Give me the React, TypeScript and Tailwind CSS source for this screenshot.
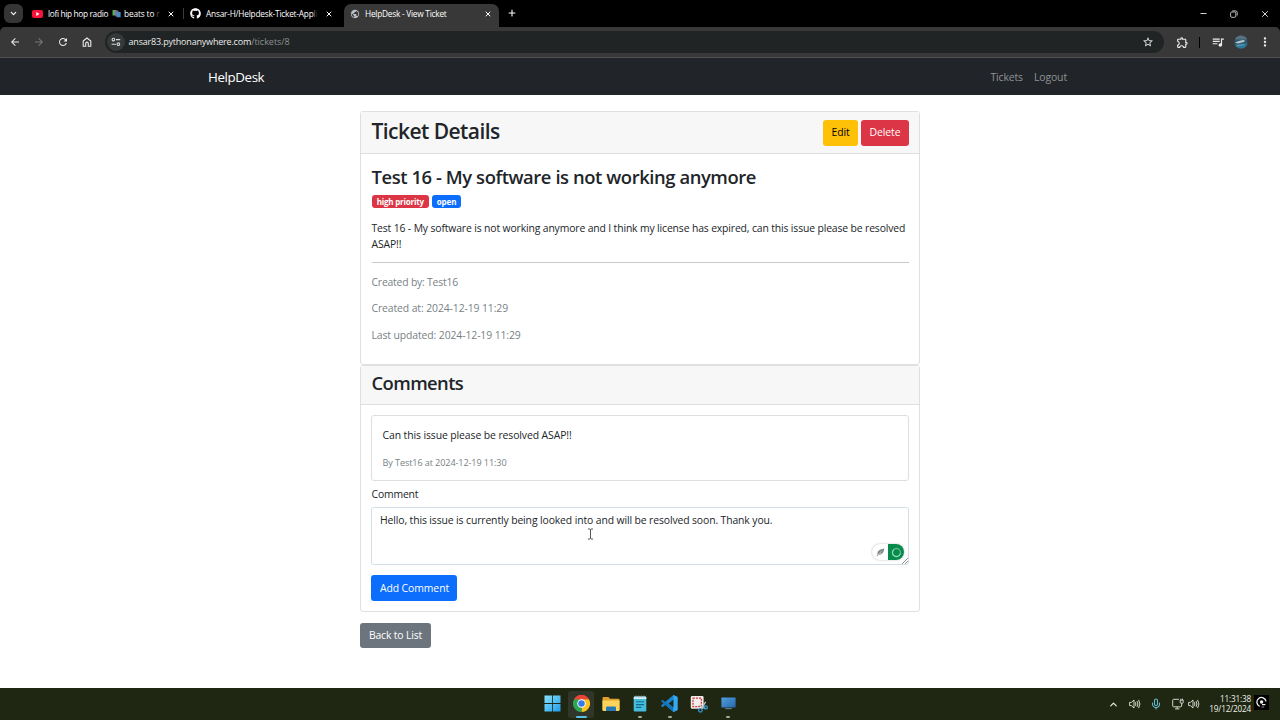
import React from 'react';
import { FaGithub } from 'react-icons/fa';
import {
  MdArrowBack,
  MdArrowForward,
  MdRefresh,
  MdStarBorder,
  MdOutlineExtension,
  MdQueueMusic,
  MdMoreVert,
  MdPublic,
} from 'react-icons/md';
import { ChevronDown, ChevronUp, Mic, Minus, Plus, X } from 'lucide-react';

const YoutubeIcon = () => (
  <svg width="11" height="8" viewBox="0 0 11 8" className="shrink-0">
    <rect width="11" height="8" rx="2" fill="#f5133c" />
    <path d="M4.3 2.1v3.8L7.5 4z" fill="#fff" />
  </svg>
);

const EmojiIcon = () => (
  <svg width="9" height="9" viewBox="0 0 9 9" className="inline-block mx-[3.5px] align-[-1px]">
    <path d="M0.5 1h4v5.5h-4z" fill="#56b04c" />
    <path d="M2.7 2l3.6-.6.9 5.8-3.6.6z" fill="#8b63b8" />
    <path d="M5 3h3.6v5.3H5z" fill="#3f8fc0" />
  </svg>
);

const HomeIcon = () => (
  <svg width="10" height="10" viewBox="0 0 10 10" fill="none" stroke="#ececec" strokeWidth="1.1" className="shrink-0">
    <path d="M1.2 4L5 1l3.8 3v5.2H6.3V6.4a1.3 1.3 0 0 0-2.6 0v2.8H1.2z" />
  </svg>
);

const TuneIcon = () => (
  <svg width="10" height="10" viewBox="0 0 10 10" fill="none" stroke="#d6d6d6" strokeWidth="1.1">
    <circle cx="2.4" cy="2.6" r="1.3" />
    <path d="M5 2.6h4.2M0.6 7.2H5" />
    <circle cx="7.4" cy="7.2" r="1.3" />
  </svg>
);

const RestoreIcon = () => (
  <svg width="8" height="8" viewBox="0 0 8 8" fill="none" stroke="#e4e4e4" strokeWidth="0.8">
    <rect x="0.6" y="2" width="5.2" height="5.3" rx="1.2" />
    <path d="M2.2 0.9h3.4q1.6 0 1.6 1.6v3" />
  </svg>
);

const Avatar = () => (
  <svg width="14" height="14" viewBox="0 0 14 14">
    <defs>
      <clipPath id="avatar">
        <circle cx="7" cy="7" r="6.6" />
      </clipPath>
    </defs>
    <g clipPath="url(#avatar)">
      <path d="M0 0h14v14H0z" fill="#2b566b" />
      <path d="M0 0h14v4.5H0z" fill="#55727e" />
      <path d="M1 7.8l3-1.6 5-1.2 2 .4-1 1.6-6 1.4z" fill="#b4c6cd" />
      <path d="M0 9.8l14-1.6V14H0z" fill="#2f7896" />
      <path d="M3 10.6l7-.9" stroke="#79aabd" strokeWidth=".8" />
    </g>
  </svg>
);

const WindowsIcon = () => (
  <svg width="17" height="17" viewBox="0 0 17 17">
    <defs>
      <linearGradient id="win" x1="0" y1="0" x2="1" y2="1">
        <stop offset="0" stopColor="#8ae3fb" />
        <stop offset="1" stopColor="#1f9cec" />
      </linearGradient>
    </defs>
    <path d="M.5.5h7.6v7.6H.5zM8.9.5h7.6v7.6H8.9zM.5 8.9h7.6v7.6H.5zM8.9 8.9h7.6v7.6H8.9z" fill="url(#win)" />
  </svg>
);

const ChromeIcon = () => (
  <svg width="17" height="17" viewBox="0 0 48 48">
    <path d="M24 24L3.2 12A24 24 0 0 1 44.8 12z" fill="#e94435" />
    <path d="M24 24L44.8 12A24 24 0 0 1 24 48z" fill="#fcc31e" />
    <path d="M24 24V48A24 24 0 0 1 3.2 12z" fill="#31a652" />
    <path d="M24 12h20.8L34 30z" fill="#fcc31e" />
    <path d="M3.2 12L13.6 30 24 12z" fill="#31a652" />
    <path d="M3.2 12h41.6A24 24 0 0 0 3.2 12z" fill="#e94435" />
    <circle cx="24" cy="24" r="12" fill="#fff" />
    <circle cx="24" cy="24" r="9.2" fill="#357ae8" />
  </svg>
);

const FolderIcon = () => (
  <svg width="18" height="16" viewBox="0 0 18 16">
    <path d="M.5 2.2Q.5 1 1.7 1h4.6l1.8 1.8h8.2q1.2 0 1.2 1.2v10H.5z" fill="#dfa12d" />
    <path d="M.5 4.5h17v9.3q0 1.2-1.2 1.2H1.7Q.5 15 .5 13.8z" fill="#fbd35d" />
    <path d="M4 15v-3.4q0-1.1 1.1-1.1h7.8q1.1 0 1.1 1.1V15z" fill="#2878b6" />
  </svg>
);

const NotepadIcon = () => (
  <svg width="14" height="17" viewBox="0 0 14 17">
    <rect x=".7" y="1.6" width="12.6" height="14.8" rx="1.2" fill="#45bede" />
    <path d="M.7 2.8q0-1.2 1.2-1.2h10.2q1.2 0 1.2 1.2V4H.7z" fill="#d8eff5" />
    <path d="M3 .5v2.2M5.7.5v2.2M8.4.5v2.2M11 .5v2.2" stroke="#8fa9b0" strokeWidth=".9" />
    <path d="M3 6.8h8M3 9.6h8M3 12.4h5.5" stroke="#15688c" strokeWidth="1.1" />
  </svg>
);

const VsCodeIcon = () => (
  <svg width="17" height="17" viewBox="0 0 24 24">
    <path d="M17.5 0L23.4 2.8V21.2L17.5 24 6.4 13.9 2.1 17.2.5 16.2V14.6L17.5 0z" fill="#1a83cd" />
    <path d="M17.5 24L.5 9.4V7.8L2.1 6.8 17.5 18z" fill="#1474b8" />
    <path d="M17.5 0L23.4 2.8V21.2L17.5 24z" fill="#36a7f0" />
    <path d="M17.5 6.8v10.4L10.7 12z" fill="#1f2712" />
  </svg>
);

const SnipIcon = () => (
  <svg width="18" height="18" viewBox="0 0 18 18">
    <rect x=".8" y="1" width="12.8" height="12.8" rx="1.4" fill="#f4eded" />
    <rect x="3" y="3.2" width="8.4" height="8.4" fill="none" stroke="#ca3b35" strokeWidth="1.3" strokeDasharray="2 1" />
    <path d="M15.6 6.8l-3.8 6.4M8.6 10l7 3.6" stroke="#b9c8cf" strokeWidth="1.3" />
    <circle cx="10.4" cy="15.3" r="1.8" fill="none" stroke="#3b9ed8" strokeWidth="1.2" />
    <circle cx="15.8" cy="12.4" r="1.6" fill="none" stroke="#3b9ed8" strokeWidth="1.2" />
  </svg>
);

const MonitorIcon = () => (
  <svg width="15" height="13" viewBox="0 0 15 13">
    <defs>
      <linearGradient id="monitor" x1="0" y1="0" x2="1" y2="1">
        <stop offset="0" stopColor="#4f9fe0" />
        <stop offset="1" stopColor="#2767a8" />
      </linearGradient>
    </defs>
    <rect x=".4" y=".5" width="14.2" height="10" rx=".8" fill="url(#monitor)" />
    <path d="M4.2 11h6.6v1.2H4.2z" fill="#5f7888" />
  </svg>
);

const SpeakerIcon = () => (
  <svg width="12" height="10" viewBox="0 0 12 10" fill="none" stroke="#e3e6de" strokeWidth=".9" className="shrink-0">
    <path d="M.6 3.4h1.8L5 1v8L2.4 6.6H.6z" strokeLinejoin="round" />
    <path d="M6.6 3.6q.8 1.4 0 2.8M8.2 2.4q1.6 2.6 0 5.2M9.8 1.2q2.4 3.8 0 7.6" strokeLinecap="round" />
  </svg>
);

const NetworkIcon = () => (
  <svg width="12" height="12" viewBox="0 0 12 12" fill="none" stroke="#e3e6de" strokeWidth=".9">
    <path d="M7 1.3H1.6q-.9 0-.9.9v5.7q0 .9.9.9h7.1q.9 0 .9-.9V6.6M5.2 8.8v2M3 10.9h4.5" />
    <path d="M8.2 2.2h3v2.2q0 .8-.8.8h-1.4q-.8 0-.8-.8zM8.9 2V.7M10.5 2V.7M9.7 5.2v2" />
  </svg>
);

const FocusIcon = () => (
  <svg width="13" height="13" viewBox="0 0 13 13" fill="none" stroke="#f1f1f1">
    <path d="M4.6 10.3A4.6 4.6 0 1 1 11 5.4" strokeWidth="1.3" />
    <circle cx="6.6" cy="6" r="1.7" fill="#f1f1f1" stroke="none" />
    <path d="M7 8.6h3.4" strokeWidth="1.2" />
    <path d="M6.6 11h2.6" stroke="#8c8c8c" strokeWidth="1" />
  </svg>
);

const FeatherIcon = () => (
  <svg width="9" height="9" viewBox="0 0 9 9">
    <path d="M1.6 6.7Q.8 3.5 4 1.8 6 .8 8.3.6 8 3.8 6.6 5.2 4.8 7 2.4 6.8L1 8.5.5 8z" fill="#7d858c" />
    <path d="M2 7l4-4.4M3.6 5.4h2.6" stroke="#fff" strokeWidth=".4" />
  </svg>
);

const Tabs = () => (
  <div className="flex h-[27px] bg-black text-[8.3px] text-white">
    <div className="ml-1 mt-1 flex size-[19px] shrink-0 items-center justify-center rounded-[6px] bg-[#353535]">
      <ChevronDown size={9} strokeWidth={3} />
    </div>
    <div className="ml-[9px] flex w-[151px] items-center">
      <YoutubeIcon />
      <div className="ml-[5px] w-[112px] whitespace-nowrap pt-px tracking-[-0.33px]">
        lofi hip hop radio
        <EmojiIcon />
        <span className="tracking-[-0.15px]">
          beats to <span className="text-[#555]">r</span>
        </span>
      </div>
      <X size={8} strokeWidth={3} className="ml-[7px]" />
    </div>
    <div className="mt-2 h-[11px] w-px bg-[#3b3b3b]" />
    <div className="ml-[6px] flex w-[154px] items-center">
      <FaGithub size={11} className="shrink-0" />
      <div className="ml-[5px] w-[111px] whitespace-nowrap pt-px tracking-[-0.22px]">
        Ansar-H/Helpdesk-Ticket-App<span className="text-[#777]">l</span>
        <span className="text-[#333]">i</span>
      </div>
      <X size={8} strokeWidth={3} className="ml-[8px]" />
    </div>
    <div className="mt-1 flex w-[155px] items-center rounded-t-[7px] bg-[#383838] pb-[3px] pl-[6px]">
      <MdPublic size={10} className="text-[#b9c1c9]" />
      <span className="ml-[5px] w-[116px] whitespace-nowrap pt-px tracking-[-0.24px]">HelpDesk - View Ticket</span>
      <X size={8} strokeWidth={3} className="ml-[3px]" />
    </div>
    <Plus size={10} strokeWidth={2.6} className="ml-[8px] mt-[8px]" />
    <div className="ml-auto flex items-center gap-[22px] pr-[10px]">
      <Minus size={9} strokeWidth={2.2} />
      <RestoreIcon />
      <X size={10} strokeWidth={2} />
    </div>
  </div>
);

const Toolbar = () => (
  <div className="flex h-[31px] items-center rounded-t-[5px] border-b border-[#505050] bg-[#383838] text-[#ececec]">
    <MdArrowBack size={12} className="ml-[9px]" />
    <MdArrowForward size={12} className="ml-[12px] text-[#777]" />
    <MdRefresh size={12} className="ml-[12px]" />
    <div className="ml-[12.5px] mr-[13.5px]">
      <HomeIcon />
    </div>
    <div className="flex h-[22px] w-[1059px] items-center rounded-full bg-[#202424] pl-[1.5px] pr-[10px]">
      <div className="flex size-[18px] items-center justify-center rounded-full bg-[#363939]">
        <TuneIcon />
      </div>
      <span className="ml-[4px] text-[9px] tracking-[-0.19px]">
        ansar83.pythonanywhere.com<span className="tracking-[-0.02px] text-[#8c9092]">/tickets/8</span>
      </span>
      <MdStarBorder size={12} className="ml-auto" />
    </div>
    <MdOutlineExtension size={13} className="ml-[12px]" />
    <div className="ml-[10px] h-[11px] w-px bg-black" />
    <MdQueueMusic size={14} className="ml-[10.5px]" />
    <div className="ml-[9.5px]">
      <Avatar />
    </div>
    <MdMoreVert size={14} className="ml-[10px]" />
  </div>
);

const Navbar = () => (
  <nav className="flex h-[37px] items-center bg-[#212529] pl-[208px] pr-[213px]">
    <span className="pt-[2px] text-[13.33px] tracking-[-0.39px] text-white">HelpDesk</span>
    <span className="ml-auto pt-[2px] text-[10.4px] tracking-[-0.1px] text-[#909294]">Tickets</span>
    <span className="ml-[11px] pt-[2px] text-[10.4px] tracking-[-0.1px] text-[#909294]">Logout</span>
  </nav>
);

const TicketCard = () => (
  <section className="h-[254px] rounded-[3px] border border-[#dfdfdf]">
    <header className="flex h-[42px] justify-between border-b border-[#dfdfdf] bg-[#f7f7f7] pl-[10.5px] pr-[10px]">
      <h2 className="pt-[6px] text-[21px] font-semibold leading-[26px] tracking-[-0.55px]">Ticket Details</h2>
      <div className="flex gap-[3px] pt-2 text-[10.4px] tracking-[-0.1px]">
        <button className="h-[25.5px] w-[35px] rounded-[3px] bg-[#ffc107] pt-px text-black">Edit</button>
        <button className="h-[25.5px] w-[48px] rounded-[3px] bg-[#dc3545] pt-px text-white">Delete</button>
      </div>
    </header>
    <div className="pl-[10.5px] pr-[10px] pt-[11px]">
      <h3 className="whitespace-nowrap text-[18.4px] font-semibold leading-[23px] tracking-[-0.42px]">
        Test 16 - My software is not working anymore
      </h3>
      <div className="mt-[7px] flex gap-[3px] text-[8px] font-bold leading-[14px] text-white">
        <span className="h-[13px] w-[57.5px] rounded-[3px] bg-[#dc3545] text-center tracking-[-0.2px]">high priority</span>
        <span className="h-[13px] w-[29px] rounded-[3px] bg-[#0d6efd] text-center tracking-[-0.1px]">open</span>
      </div>
      <p className="mt-[12px] whitespace-nowrap text-[10.4px] leading-4 tracking-[-0.14px]">
        Test 16 - My software is not working anymore and I think my license has expired, can this issue please be resolved
        <br />
        ASAP!!
      </p>
      <hr className="mt-[10px] border-[#c8c9ca]" />
      <div className="mt-[10.6px] flex flex-col gap-[10.67px] text-[10.4px] leading-4 tracking-[-0.1px] text-[#787f85]">
        <p className="tracking-[-0.2px]">Created by: Test16</p>
        <p>Created at: 2024-12-19 11:29</p>
        <p>Last updated: 2024-12-19 11:29</p>
      </div>
    </div>
  </section>
);

const CommentsCard = () => (
  <section className="h-[247px] rounded-[3px] border border-[#dfdfdf]">
    <header className="h-[39px] border-b border-[#dfdfdf] bg-[#f7f7f7] px-[10.5px] pt-[5px]">
      <h3 className="text-[18.4px] font-semibold leading-[23px] tracking-[-0.6px]">Comments</h3>
    </header>
    <div className="px-[10px] pt-[10px]">
      <div className="h-[66px] rounded-[3px] border border-[#dfdfdf] px-[10.5px] pt-[11px]">
        <p className="text-[10.4px] leading-4 tracking-[-0.09px]">Can this issue please be resolved ASAP!!</p>
        <p className="mt-[12.5px] text-[9.1px] leading-[14px] tracking-[-0.1px] text-[#787f85]">
          By Test16 at 2024-12-19 11:30
        </p>
      </div>
      <label className="mt-[5px] block pl-[0.5px] text-[10.4px] leading-4 tracking-[-0.15px]">Comment</label>
      <div className="relative mt-[5px]">
        <textarea
          className="block h-[58px] w-full resize-none rounded-[3px] border border-[#d3dfe3] px-2 py-1 text-[10.4px] leading-4 tracking-[-0.115px] outline-none"
          defaultValue="Hello, this issue is currently being looked into and will be resolved soon. Thank you."
        />
        {/* writing assistant badge */}
        <div className="absolute bottom-[5px] right-[5px] flex h-[16px] w-[32px] overflow-hidden rounded-full bg-white shadow-[0_0_2px_rgba(0,0,0,0.3)]">
          <div className="flex w-4 items-center justify-center">
            <FeatherIcon />
          </div>
          <div className="flex w-4 items-center justify-center bg-[#078a4c]">
            <svg width="11" height="11" viewBox="0 0 11 11" fill="none">
              <circle cx="5.5" cy="5.5" r="4" stroke="#57b98a" strokeWidth="1.3" />
              <path d="M2.8 2.6A4 4 0 1 0 9.3 6.5" stroke="#8fdcb6" strokeWidth="1.1" />
            </svg>
          </div>
        </div>
        <svg className="absolute bottom-0 right-0" width="8" height="8" viewBox="0 0 8 8" stroke="#777" strokeWidth=".8">
          <path d="M1 7L7 1M4 7l3-3" />
        </svg>
        {/* text cursor */}
        <svg className="absolute left-[216px] top-[21px]" width="7" height="12" viewBox="0 0 7 12" fill="none" stroke="#555">
          <path d="M1 1h2l.5.5L4 1h2M3.5 1.5v9M1 11h2l.5-.5.5.5h2" />
        </svg>
      </div>
      <button className="mt-[10px] h-[26px] w-[86px] rounded-[3px] bg-[#0d6efd] pl-px pt-px text-[10.4px] tracking-[-0.07px] text-white">
        Add Comment
      </button>
    </div>
  </section>
);

const apps = [
  { id: 'start', icon: <WindowsIcon />, state: 'none' },
  { id: 'chrome', icon: <ChromeIcon />, state: 'active' },
  { id: 'files', icon: <FolderIcon />, state: 'none' },
  { id: 'notepad', icon: <NotepadIcon />, state: 'open' },
  { id: 'vscode', icon: <VsCodeIcon />, state: 'open' },
  { id: 'snip', icon: <SnipIcon />, state: 'none' },
  { id: 'monitor', icon: <MonitorIcon />, state: 'open' },
];

const Taskbar = () => (
  <footer className="flex h-8 items-center bg-[#1f2712] text-[#eef0ea]">
    <div className="ml-[539px] flex gap-[3.4px]">
      {apps.map((app) => (
        <div
          key={app.id}
          className={`flex h-[27px] w-[26px] flex-col items-center justify-between rounded-[3px] ${
            app.state === 'active' ? 'bg-[#30372a]' : ''
          }`}
        >
          <div className="flex h-[26px] items-center">{app.icon}</div>
          {app.state === 'active' && <div className="h-[2px] w-[11px] shrink-0 rounded-full bg-[#58bfe8]" />}
          {app.state === 'open' && <div className="h-[2px] w-[4px] shrink-0 rounded-full bg-[#a3a79d]" />}
        </div>
      ))}
    </div>
    <ChevronUp size={11} strokeWidth={2.6} className="ml-auto" />
    <div className="ml-[10px]">
      <SpeakerIcon />
    </div>
    <Mic size={12} strokeWidth={2.2} className="ml-[9px] text-[#66b9d0]" />
    <div className="ml-[9.5px]">
      <NetworkIcon />
    </div>
    <div className="ml-[4px]">
      <SpeakerIcon />
    </div>
    <div className="ml-[7.5px] w-[44px] whitespace-nowrap text-right text-[8.2px] leading-[10.5px] tracking-[-0.18px]">
      <div>11:31:38</div>
      <div>19/12/2024</div>
    </div>
    <div className="mb-[3px] ml-[3px] mr-[11px] flex size-[15px] items-center justify-center bg-black">
      <FocusIcon />
    </div>
  </footer>
);

const App: React.FC = () => {
  return (
    <div className="flex h-[720px] w-[1280px] flex-col overflow-hidden bg-white font-['Open_Sans','Noto_Sans',sans-serif] text-[#212529]">
      <div className="bg-black">
        <Tabs />
        <Toolbar />
      </div>
      <Navbar />
      <main className="mx-auto w-[560px] flex-1 pt-4">
        <TicketCard />
        <CommentsCard />
        <button className="mt-[11px] block h-[25px] w-[71px] rounded-[3px] bg-[#6c757d] pt-px text-[10.4px] tracking-[-0.15px] text-white">
          Back to List
        </button>
      </main>
      <Taskbar />
    </div>
  );
};

export default App;
